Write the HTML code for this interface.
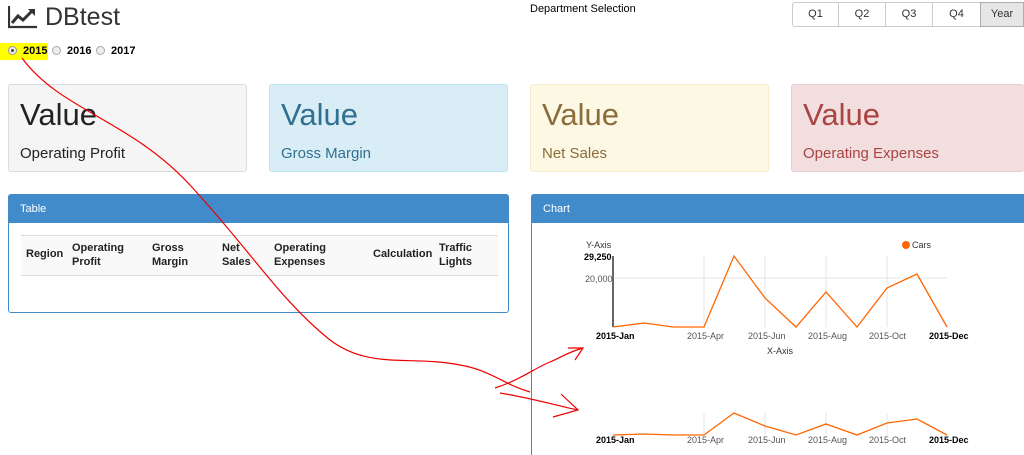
<!DOCTYPE html>
<html><head><meta charset="utf-8"><style>
*{box-sizing:border-box;margin:0;padding:0}
html,body{width:1024px;height:455px;overflow:hidden}
body{background:#fff;font-family:"Liberation Sans",Arial,sans-serif;color:#333;position:relative}
.abs{position:absolute}
.btn{position:absolute;top:2px;height:25px;border:1px solid #ccc;background:#fff;font-size:11px;text-align:center;line-height:23px;color:#333}
.card{position:absolute;top:84px;width:239px;height:88px;border:1px solid #ddd;border-radius:3px}
.card .v{position:absolute;left:11px;top:12px;font-size:31px}
.card .s{position:absolute;left:11px;top:60px;font-size:15px}
.panel{position:absolute;border:1px solid #428bca;border-radius:3px;background:#fff}
.ph{background:#428bca;color:#fff;font-size:11px;height:28px;line-height:28px;padding-left:11px}
</style></head><body>
<svg class="abs" style="left:8px;top:5px" width="30" height="24" viewBox="0 0 30 24"><path d="M1 1V22H29" fill="none" stroke="#333" stroke-width="2.2"/><path d="M4 18L10 11L15 15L25 5" fill="none" stroke="#333" stroke-width="3"/><path d="M20 4H27V11Z" fill="#333"/></svg>
<div class="abs" style="left:45px;top:3px;font-size:25px;color:#333">DBtest</div>
<div class="abs" style="left:0;top:43px;width:48px;height:17px;background:#ffff00"></div>
<div class="abs" style="left:8px;top:46px;width:9px;height:9px;border-radius:50%;border:1px solid #999;background:#eee"><div style="margin:2px;width:3px;height:3px;border-radius:50%;background:#444"></div></div>
<div class="abs" style="left:23px;top:45px;font-size:11px;font-weight:bold;color:#000">2015</div>
<div class="abs" style="left:52px;top:46px;width:9px;height:9px;border-radius:50%;border:1px solid #aaa;background:#eee"></div>
<div class="abs" style="left:67px;top:45px;font-size:11px;font-weight:bold;color:#000">2016</div>
<div class="abs" style="left:96px;top:46px;width:9px;height:9px;border-radius:50%;border:1px solid #aaa;background:#eee"></div>
<div class="abs" style="left:111px;top:45px;font-size:11px;font-weight:bold;color:#000">2017</div>
<div class="abs" style="left:530px;top:3px;font-size:11px;color:#000">Department Selection</div>
<div class="btn" style="left:792px;width:47px;border-radius:3px 0 0 3px">Q1</div>
<div class="btn" style="left:838px;width:48px">Q2</div>
<div class="btn" style="left:885px;width:48px">Q3</div>
<div class="btn" style="left:932px;width:49px">Q4</div>
<div class="btn" style="left:980px;width:44px;background:#e6e6e6;border-color:#adadad">Year</div>

<div class="card" style="left:8px;background:#f5f5f5;color:#222"><div class="v">Value</div><div class="s">Operating Profit</div></div>
<div class="card" style="left:269px;background:#d9edf7;border-color:#bce8f1;color:#31708f"><div class="v">Value</div><div class="s">Gross Margin</div></div>
<div class="card" style="left:530px;background:#fcf8e3;border-color:#faebcc;color:#8a6d3b"><div class="v">Value</div><div class="s">Net Sales</div></div>
<div class="card" style="left:791px;width:233px;border-right:none;background:#f2dede;border-color:#ebccd1;color:#a94442"><div class="v">Value</div><div class="s">Operating Expenses</div></div>

<div class="panel" style="left:8px;top:194px;width:501px;height:119px"><div class="ph">Table</div>
<div class="abs" style="left:12px;top:40px;width:477px;height:41px;background:#f9f9f9;border-top:1px solid #ddd;border-bottom:1px solid #ddd"></div>
</div>
<div class="abs" style="left:26px;top:248px;font-size:11px;font-weight:bold;color:#222">Region</div>
<div class="abs" style="left:72px;top:241px;font-size:11px;font-weight:bold;color:#222;line-height:14px">Operating<br>Profit</div>
<div class="abs" style="left:152px;top:241px;font-size:11px;font-weight:bold;color:#222;line-height:14px">Gross<br>Margin</div>
<div class="abs" style="left:222px;top:241px;font-size:11px;font-weight:bold;color:#222;line-height:14px">Net<br>Sales</div>
<div class="abs" style="left:274px;top:241px;font-size:11px;font-weight:bold;color:#222;line-height:14px">Operating<br>Expenses</div>
<div class="abs" style="left:373px;top:248px;font-size:11px;font-weight:bold;color:#222">Calculation</div>
<div class="abs" style="left:439px;top:241px;font-size:11px;font-weight:bold;color:#222;line-height:14px">Traffic<br>Lights</div>

<div class="panel" style="left:531px;top:194px;width:493px;height:261px;border-bottom:none;border-right:none;border-radius:3px 0 0 0"><div class="ph">Chart</div></div>

<svg class="abs" style="left:0;top:0" width="1024" height="455" font-family="Liberation Sans, Arial, sans-serif" font-size="9">
<g stroke="#e6e6e6" stroke-width="1">
<line x1="614" y1="278" x2="947" y2="278"/>
<line x1="704" y1="256" x2="704" y2="327"/><line x1="765" y1="256" x2="765" y2="327"/><line x1="826" y1="256" x2="826" y2="327"/><line x1="887" y1="256" x2="887" y2="327"/>
<line x1="704" y1="413" x2="704" y2="435"/><line x1="765" y1="413" x2="765" y2="435"/><line x1="826" y1="413" x2="826" y2="435"/><line x1="887" y1="413" x2="887" y2="435"/>
</g>
<line x1="613" y1="256" x2="613" y2="327" stroke="#666" stroke-width="2"/>
<polyline fill="none" stroke="#ff6600" stroke-width="1.3" points="613,327 644,323 673,327 704,327 734,256 765,298 796,327 826,292 857,327 887,288 917,274 947,327"/>
<polyline fill="none" stroke="#ff6600" stroke-width="1.3" points="613,435 644,434 673,435 704,435 734,413 765,426 796,435 826,424 857,435 887,423 917,419 947,435"/>
<text x="586" y="248" fill="#333">Y-Axis</text>
<text x="584" y="260" font-weight="bold" fill="#000">29,250</text>
<text x="585" y="282" fill="#555">20,000</text>
<circle cx="906" cy="245" r="4" fill="#ff6600"/><text x="912" y="248" fill="#333">Cars</text>
<g fill="#555"><text x="687" y="339">2015-Apr</text><text x="748" y="339">2015-Jun</text><text x="808" y="339">2015-Aug</text><text x="869" y="339">2015-Oct</text>
<text x="687" y="443">2015-Apr</text><text x="748" y="443">2015-Jun</text><text x="808" y="443">2015-Aug</text><text x="869" y="443">2015-Oct</text></g>
<g fill="#000" font-weight="bold"><text x="596" y="339">2015-Jan</text><text x="929" y="339">2015-Dec</text><text x="596" y="443">2015-Jan</text><text x="929" y="443">2015-Dec</text></g>
<text x="767" y="354" fill="#333">X-Axis</text>
<g fill="none" stroke="#e00" stroke-width="1.2">
<path d="M22 58C60 110 130 120 190 185C250 250 280 300 330 340C370 370 410 355 460 365C490 370 505 385 530 392"/>
<path d="M495 388C520 380 535 368 550 362C560 358 568 352 583 348M568 348L583 348L575 360"/>
<path d="M500 393C530 398 555 405 578 410M561 394L578 410L553 417"/>
</g>
</svg>
</body></html>
